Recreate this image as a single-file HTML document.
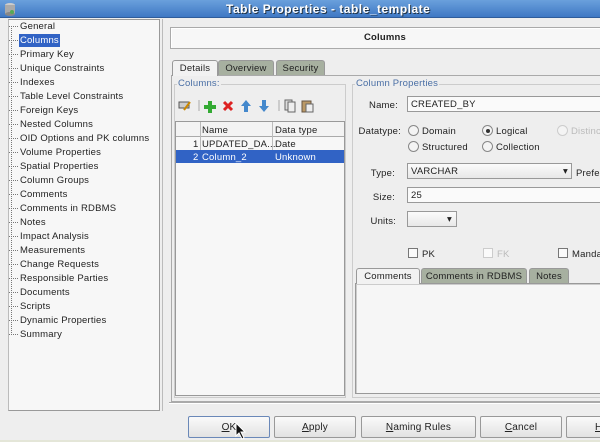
<!DOCTYPE html>
<html><head><style>
*{margin:0;padding:0;box-sizing:border-box}
body{width:600px;height:442px;overflow:hidden;background:#eeeeee;font-family:"Liberation Sans","DejaVu Sans",sans-serif;font-size:9.5px;letter-spacing:.2px;color:#222;position:relative}
.a{position:absolute;white-space:nowrap}
.title{left:0;top:0;width:600px;height:18px;background:linear-gradient(#6aa0dc,#3f78c4);border-bottom:1px solid #2f5c9a}
.title span{position:absolute;left:226px;top:2px;color:#fff;font-weight:bold;font-size:12px;letter-spacing:.5px;text-shadow:1px 1px 0 #234}
.tree{left:8px;top:19px;width:152px;height:392px;background:#f7f7f7;border:1px solid #999;border-left:1px solid #bbb}
.ti{position:absolute;left:12px;height:13px;line-height:14px}
.tl{position:absolute;left:1px;width:9px;border-top:1px dotted #777}
.box{background:#f7f7f7;border:1px solid #aaa;box-shadow:inset 1px 1px 0 #fff}
.tab{position:absolute;top:60px;height:15px;line-height:15px;text-align:center;border:1px solid #999;border-bottom:none;border-radius:3px 3px 0 0;background:#a7b0a0}
.btn{position:absolute;top:416px;height:22px;line-height:21px;text-align:center;border:1px solid #999;border-radius:2px;background:linear-gradient(#fafafa,#e2e2e2);font-size:10px}
.fld{position:absolute;height:16px;line-height:15px;background:#fafafa;border:1px solid #999;padding-left:3px;font-size:9.5px}
.rad{position:absolute;width:11px;height:11px;border:1px solid #888;border-radius:50%;background:#f4f4f4}
.chk{position:absolute;width:10px;height:10px;border:1px solid #777;background:#fafafa}
.lbl{position:absolute;text-align:right;width:50px}
</style></head><body>
<div class="a title"><svg style="position:absolute;left:4px;top:2px" width="12" height="14"><ellipse cx="6" cy="3" rx="5" ry="2" fill="#ccc"/><rect x="1" y="3" width="10" height="9" fill="#aaa"/><ellipse cx="6" cy="12" rx="5" ry="2" fill="#888"/><circle cx="8" cy="10" r="2" fill="#5a5"/></svg><span>Table Properties - table_template</span></div>

<div class="a tree">
<div style="position:absolute;left:2px;top:6px;height:309px;border-left:1px dotted #777"></div>
</div>
<div class="a" style="left:8px;top:19px">
<div class="tl" style="top:7px"></div><div class="ti" style="top:1px">General</div>
<div class="tl" style="top:21px"></div><div class="ti" style="top:15px;background:#3163c5;color:#fff;padding:0 1px;left:11px">Columns</div>
<div class="tl" style="top:35px"></div><div class="ti" style="top:29px">Primary Key</div>
<div class="tl" style="top:49px"></div><div class="ti" style="top:43px">Unique Constraints</div>
<div class="tl" style="top:63px"></div><div class="ti" style="top:57px">Indexes</div>
<div class="tl" style="top:77px"></div><div class="ti" style="top:71px">Table Level Constraints</div>
<div class="tl" style="top:91px"></div><div class="ti" style="top:85px">Foreign Keys</div>
<div class="tl" style="top:105px"></div><div class="ti" style="top:99px">Nested Columns</div>
<div class="tl" style="top:119px"></div><div class="ti" style="top:113px">OID Options and PK columns</div>
<div class="tl" style="top:133px"></div><div class="ti" style="top:127px">Volume Properties</div>
<div class="tl" style="top:147px"></div><div class="ti" style="top:141px">Spatial Properties</div>
<div class="tl" style="top:161px"></div><div class="ti" style="top:155px">Column Groups</div>
<div class="tl" style="top:175px"></div><div class="ti" style="top:169px">Comments</div>
<div class="tl" style="top:189px"></div><div class="ti" style="top:183px">Comments in RDBMS</div>
<div class="tl" style="top:203px"></div><div class="ti" style="top:197px">Notes</div>
<div class="tl" style="top:217px"></div><div class="ti" style="top:211px">Impact Analysis</div>
<div class="tl" style="top:231px"></div><div class="ti" style="top:225px">Measurements</div>
<div class="tl" style="top:245px"></div><div class="ti" style="top:239px">Change Requests</div>
<div class="tl" style="top:259px"></div><div class="ti" style="top:253px">Responsible Parties</div>
<div class="tl" style="top:273px"></div><div class="ti" style="top:267px">Documents</div>
<div class="tl" style="top:287px"></div><div class="ti" style="top:281px">Scripts</div>
<div class="tl" style="top:301px"></div><div class="ti" style="top:295px">Dynamic Properties</div>
<div class="tl" style="top:315px"></div><div class="ti" style="top:309px">Summary</div>
</div>
<div class="a" style="left:162px;top:19px;width:1px;height:392px;background:#bbb"></div>

<div class="a box" style="left:170px;top:27px;width:440px;height:22px;text-align:center;line-height:20px;font-weight:bold;padding-right:10px">Columns</div>

<div class="tab" style="left:172px;width:46px;background:#f2f2f2;height:16px;z-index:2">Details</div>
<div class="tab" style="left:218px;width:56px">Overview</div>
<div class="tab" style="left:276px;width:49px">Security</div>
<div class="a" style="left:171px;top:75px;width:440px;height:327px;border:1px solid #aaa;border-right:none"></div>

<div class="a" style="left:174px;top:84px;width:172px;height:314px;border:1px solid #ccc"></div>
<div class="a" style="left:177px;top:78px;color:#4a6fa5;background:#eee;padding:0 1px">Columns:</div>
<svg class="a" style="left:178px;top:99px" width="142" height="14">
<rect x="1" y="3" width="10" height="6" fill="#ccc" stroke="#555"/><path d="M6 11 L12 3" stroke="#c80" stroke-width="2"/>
<line x1="21" y1="1" x2="21" y2="12" stroke="#aaa"/>
<path d="M30 2h4v4h4v4h-4v4h-4v-4h-4v-4h4z" fill="#3a3"/>
<path d="M46 3l8 8M54 3l-8 8" stroke="#d22" stroke-width="3"/>
<path d="M68 1l5 6h-3v6h-4v-6h-3z" fill="#48c"/>
<path d="M86 13l5-6h-3v-6h-4v6h-3z" fill="#48c"/>
<line x1="101" y1="1" x2="101" y2="12" stroke="#aaa"/>
<rect x="107" y="1" width="7" height="10" fill="#ddd" stroke="#666"/><rect x="110" y="3" width="7" height="10" fill="#eee" stroke="#666"/>
<rect x="124" y="2" width="9" height="11" fill="#b96" stroke="#654"/><rect x="128" y="5" width="7" height="8" fill="#eee" stroke="#666"/>
</svg>
<div class="a" style="left:175px;top:121px;width:170px;height:275px;background:#f7f7f7;border:1px solid #999"></div>
<div class="a" style="left:176px;top:122px;width:168px;height:15px;background:#f3f3f3;border-bottom:1px solid #aaa"></div>
<div class="a" style="left:200px;top:122px;width:1px;height:41px;background:#bbb"></div>
<div class="a" style="left:272px;top:122px;width:1px;height:41px;background:#bbb"></div>
<div class="a" style="left:202px;top:125px">Name</div>
<div class="a" style="left:275px;top:125px">Data type</div>
<div class="a" style="left:176px;top:150px;width:168px;height:13px;background:#3163c5"></div>
<div class="a" style="left:193px;top:139px">1</div><div class="a" style="left:202px;top:139px">UPDATED_DA...</div><div class="a" style="left:275px;top:139px">Date</div>
<div class="a" style="left:193px;top:152px;color:#fff">2</div><div class="a" style="left:202px;top:152px;color:#fff">Column_2</div><div class="a" style="left:275px;top:152px;color:#fff">Unknown</div>

<div class="a" style="left:352px;top:84px;width:260px;height:314px;border:1px solid #ccc"></div>
<div class="a" style="left:355px;top:78px;color:#4a6fa5;background:#eee;padding:0 1px">Column Properties</div>
<div class="lbl" style="left:348px;top:100px">Name:</div>
<div class="fld" style="left:407px;top:96px;width:200px">CREATED_BY</div>
<div class="lbl" style="left:351px;top:126px">Datatype:</div>
<div class="rad" style="left:408px;top:125px"></div><div class="a" style="left:422px;top:126px">Domain</div>
<div class="rad" style="left:482px;top:125px"></div><div class="a" style="left:486px;top:129px;width:4px;height:4px;border-radius:50%;background:#333"></div><div class="a" style="left:496px;top:126px">Logical</div>
<div class="rad" style="left:557px;top:125px;border-color:#ccc"></div><div class="a" style="left:571px;top:126px;color:#bbb">Distinct</div>
<div class="rad" style="left:408px;top:141px"></div><div class="a" style="left:422px;top:142px">Structured</div>
<div class="rad" style="left:482px;top:141px"></div><div class="a" style="left:496px;top:142px">Collection</div>
<div class="lbl" style="left:345px;top:168px">Type:</div>
<div class="fld" style="left:407px;top:163px;width:165px;background:linear-gradient(#fbfbfb,#e8e8e8)">VARCHAR<span style="position:absolute;right:3px;top:0">▾</span></div>
<div class="a" style="left:576px;top:168px">Prefer</div>
<div class="lbl" style="left:345px;top:192px">Size:</div>
<div class="fld" style="left:407px;top:187px;width:200px">25</div>
<div class="lbl" style="left:346px;top:216px">Units:</div>
<div class="fld" style="left:407px;top:211px;width:50px;background:linear-gradient(#fbfbfb,#e8e8e8)"><span style="position:absolute;right:4px;top:0">▾</span></div>
<div class="chk" style="left:408px;top:248px"></div><div class="a" style="left:422px;top:249px">PK</div>
<div class="chk" style="left:483px;top:248px;border-color:#ccc"></div><div class="a" style="left:497px;top:249px;color:#bbb">FK</div>
<div class="chk" style="left:558px;top:248px"></div><div class="a" style="left:572px;top:249px">Manda</div>

<div class="tab" style="left:356px;top:268px;width:64px;height:16px;background:#f2f2f2;z-index:2">Comments</div>
<div class="tab" style="left:421px;top:268px;width:106px">Comments in RDBMS</div>
<div class="tab" style="left:529px;top:268px;width:40px">Notes</div>
<div class="a" style="left:355px;top:283px;width:250px;height:111px;background:#f6f6f6;border:1px solid #999;box-shadow:inset 1px 1px 0 #ccc"></div>

<div class="a" style="left:169px;top:402px;width:431px;height:2px;border-top:1px solid #aaa;border-bottom:1px solid #fff"></div>

<div class="btn" style="left:188px;width:82px;border-color:#6a88b8"><u>O</u>K</div>
<div class="btn" style="left:274px;width:82px"><u>A</u>pply</div>
<div class="btn" style="left:361px;width:115px"><u>N</u>aming Rules</div>
<div class="btn" style="left:480px;width:82px"><u>C</u>ancel</div>
<div class="btn" style="left:566px;width:60px"><span style="position:absolute;left:28px"><u>H</u></span></div>
<svg class="a" style="left:235px;top:422px" width="12" height="18"><path d="M1 1v13l3-3 3 6 2-1-3-6h4z" fill="#111" stroke="#fff" stroke-width="1"/></svg>
<div class="a" style="left:0;top:440px;width:600px;height:2px;background:#e4e6d8"></div>
</body></html>
